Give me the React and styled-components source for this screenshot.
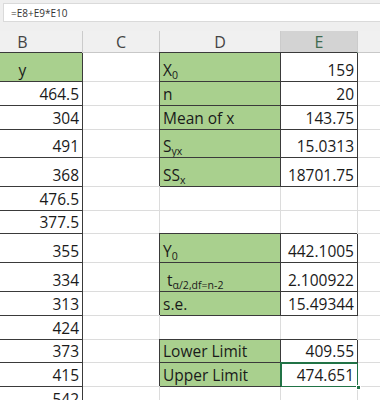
import React from "react";
import styled, { createGlobalStyle, css } from "styled-components";

const Global = createGlobalStyle`
  html, body { margin: 0; padding: 0; background: #ffffff; }
  body { width: 380px; height: 400px; overflow: hidden; }
`;

const Page = styled.div`
  width: 380px;
  height: 400px;
  overflow: hidden;
  background: #ffffff;
  font-family: "Open Sans", "Noto Sans", sans-serif;
`;

const TopBar = styled.div`
  height: 31px;
  box-sizing: border-box;
  background: #efefef;
  padding: 3px 0 9px 3px;
`;

const FormulaBox = styled.div`
  height: 19px;
  box-sizing: border-box;
  background: #ffffff;
  border: 1px solid #dadada;
  border-right: none;
  display: flex;
  align-items: center;
  padding-left: 7px;
  font-size: 10px;
  color: #333;
`;

const Sheet = styled.div`
  display: grid;
  grid-template-columns: 120px 77px 121px 77px 60px;
  margin-left: -37px;
`;

const Head = styled.div`
  height: 22px;
  box-sizing: border-box;
  background: ${(p) => (p.$active ? "#d3d3d3" : "#f0f0f0")};
  border-right: 1px solid #cbcbcb;
  border-bottom: 1px solid ${(p) => (p.$active ? "#217346" : "#c8c8c8")};
  display: flex;
  align-items: center;
  justify-content: center;
  font-size: 16px;
  color: ${(p) => (p.$active ? "#3f6b50" : "#444")};
`;

const Cell = styled.div`
  position: relative;
  box-sizing: border-box;
  height: ${(p) => p.$h}px;
  background: ${(p) => (p.$green ? "#a9d08e" : "#ffffff")};
  border-right: 1px solid #dcdcdc;
  border-bottom: 1px solid #dcdcdc;
  display: flex;
  align-items: flex-end;
  justify-content: ${(p) =>
    p.$align === "right" ? "flex-end" : p.$align === "center" ? "center" : "flex-start"};
  padding: 0 3px 1px 3px;
  font-size: 15.5px;
  line-height: 20px;
  color: #1a1a1a;
  white-space: pre;
  ${(p) =>
    p.$boxed &&
    css`
      border-right-color: #3a3a3a;
      border-bottom-color: #3a3a3a;
      box-shadow: -1px -1px 0 0 #3a3a3a;
    `}
  ${(p) =>
    p.$selected &&
    css`
      box-shadow: -1px -1px 0 0 #217346, inset 1px 1px 0 0 #217346;
      border-right-color: #217346;
      border-bottom-color: #217346;
      &::after {
        content: "";
        position: absolute;
        right: -4px;
        bottom: -4px;
        width: 5px;
        height: 5px;
        background: #217346;
        border: 1px solid #ffffff;
        box-sizing: border-box;
        z-index: 2;
      }
    `}
`;

const Text = styled.span`
  display: inline-block;
  line-height: 20px;
`;

const Sub = styled.sub`
  font-size: 0.68em;
  vertical-align: -0.3em;
  line-height: 0;
`;

const heights = [29, 24, 24, 28, 29, 24, 23, 29, 29, 24, 24, 23, 24, 24, 24];

const rows = [
  { b: "y", d: <>X<Sub>0</Sub></>, e: "159", boxed: true },
  { b: "464.5", d: "n", e: "20", boxed: true },
  { b: "304", d: "Mean of x", e: "143.75", boxed: true },
  { b: "491", d: <>S<Sub>yx</Sub></>, e: "15.0313", boxed: true },
  { b: "368", d: <>SS<Sub>x</Sub></>, e: "18701.75", boxed: true },
  { b: "476.5" },
  { b: "377.5" },
  { b: "355", d: <>Y<Sub>0</Sub></>, e: "442.1005", boxed: true },
  { b: "334", d: <>{" t"}<Sub>α/2,df=n-2</Sub></>, e: "2.100922", boxed: true },
  { b: "313", d: "s.e.", e: "15.49344", boxed: true },
  { b: "424" },
  { b: "373", d: "Lower Limit", e: "409.55", boxed: true },
  { b: "415", d: "Upper Limit", e: "474.651", boxed: true, selected: true },
  { b: "542" },
];

export default function App() {
  return (
    <Page>
      <Global />
      <TopBar>
        <FormulaBox>=E8+E9*E10</FormulaBox>
      </TopBar>
      <Sheet>
        <Head>B</Head>
        <Head>C</Head>
        <Head>D</Head>
        <Head $active>E</Head>
        <Head />
        {rows.map((r, i) => {
          const h = heights[i];
          return (
            <React.Fragment key={i}>
              <Cell $h={h} $boxed $green={i === 0} $align={i === 0 ? "center" : "right"}>
                <Text>{r.b}</Text>
              </Cell>
              <Cell $h={h} />
              <Cell $h={h} $boxed={r.boxed} $green={r.boxed}>
                {r.d && <Text>{r.d}</Text>}
              </Cell>
              <Cell $h={h} $boxed={r.boxed && !r.selected} $selected={r.selected} $align="right">
                {r.e && <Text>{r.e}</Text>}
              </Cell>
              <Cell $h={h} />
            </React.Fragment>
          );
        })}
      </Sheet>
    </Page>
  );
}
